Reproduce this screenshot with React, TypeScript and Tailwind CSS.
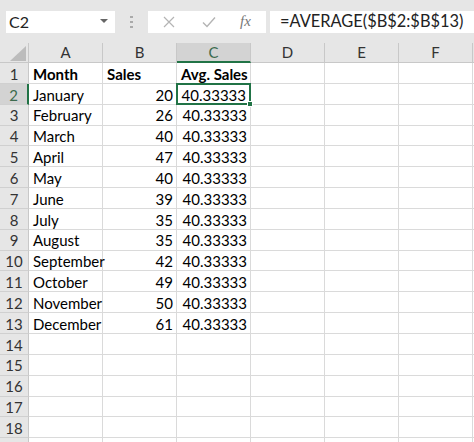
import { Fragment } from "react";

const rows: [string, string, string][] = [
  ["January", "20", "40.33333"],
  ["February", "26", "40.33333"],
  ["March", "40", "40.33333"],
  ["April", "47", "40.33333"],
  ["May", "40", "40.33333"],
  ["June", "39", "40.33333"],
  ["July", "35", "40.33333"],
  ["August", "35", "40.33333"],
  ["September", "42", "40.33333"],
  ["October", "49", "40.33333"],
  ["November", "50", "40.33333"],
  ["December", "61", "40.33333"],
];

const cols = ["A", "B", "C", "D", "E", "F"];
const font = { fontFamily: "Lato, 'Liberation Sans', sans-serif" };

function Cell({ children, right, bold }: { children?: React.ReactNode; right?: boolean; bold?: boolean }) {
  return (
    <div
      className={`h-[20.85px] border-r border-b border-[#dadada] flex items-center pt-[2px] overflow-visible whitespace-nowrap text-[15px] text-black ${
        right ? "justify-end pr-[3px]" : "pl-[4px]"
      } ${bold ? "font-bold" : ""}`}
    >
      {children}
    </div>
  );
}

export default function App() {
  return (
    <div className="w-[474px] h-[442px] overflow-hidden bg-white" style={font}>
      {/* formula bar */}
      <div className="h-[43px] bg-[#e6e6e6] flex items-center pl-[6px]">
        <div className="w-[109px] h-[22px] bg-white flex items-center justify-between pl-[3px] pr-[7px] text-[16px] text-[#222]">
          <span>C2</span>
          <svg width="8" height="5" viewBox="0 0 8 5">
            <path d="M0 0 L8 0 L4 4 Z" fill="#666" />
          </svg>
        </div>
        <div className="w-[33px] flex flex-col items-center gap-[3px]">
          <span className="w-[3px] h-[2px] bg-[#aaa]" />
          <span className="w-[3px] h-[2px] bg-[#aaa]" />
          <span className="w-[3px] h-[2px] bg-[#aaa]" />
        </div>
        <div className="w-[118px] h-[22px] bg-white flex items-center pl-[14px]">
          <svg width="12" height="12" viewBox="0 0 12 12" className="ml-[1px]">
            <path d="M1 1 L11 11 M11 1 L1 11" stroke="#b4b4b4" strokeWidth="1.2" />
          </svg>
          <svg width="14" height="12" viewBox="0 0 14 12" className="ml-[27px]">
            <path d="M1 6.5 L5 10.5 L13 1.5" stroke="#b4b4b4" strokeWidth="1.4" fill="none" />
          </svg>
          <span className="ml-[24px] text-[15px] italic text-[#777]" style={{ fontFamily: "'Liberation Serif', serif" }}>
            fx
          </span>
        </div>
        <div className="ml-[4px] flex-1 h-[22px] bg-white flex items-center pl-[10px] text-[16.4px] text-[#222]">
          =AVERAGE($B$2:$B$13)
        </div>
      </div>

      {/* sheet */}
      <div className="grid grid-cols-[29px_repeat(6,74px)_1fr]">
        {/* header row */}
        <div className="h-[20px] bg-[#e6e6e6] border-r border-b border-[#c8c8c8] flex items-end justify-end">
          <svg width="16" height="15" viewBox="0 0 16 15" className="mb-[1px] mr-[2px]">
            <path d="M0 15 L16 15 L16 0 Z" fill="#bcbcbc" />
          </svg>
        </div>
        {cols.map((c) =>
          c === "C" ? (
            <div
              key={c}
              className="h-[20px] bg-[#d3d3d3] border-r border-[#c8c8c8] border-b-2 border-b-[#217346] flex items-center justify-center text-[15px] text-[#3d6b4e]"
            >
              {c}
            </div>
          ) : (
            <div
              key={c}
              className="h-[20px] bg-[#e6e6e6] border-r border-b border-[#c8c8c8] flex items-center justify-center text-[15px] text-[#333]"
            >
              {c}
            </div>
          )
        )}
        <div className="h-[20px] bg-[#e6e6e6] border-b border-[#c8c8c8]" />

        {Array.from({ length: 19 }, (_, i) => {
          const n = i + 1;
          const data = n >= 2 && n <= 13 ? rows[n - 2] : null;
          const sel = n === 2;
          return (
            <Fragment key={n}>
              <div
                className={`h-[20.85px] border-b border-[#d0d0d0] flex items-center justify-center pt-[2px] text-[15px] ${
                  sel
                    ? "bg-[#d3d3d3] border-r-2 border-r-[#217346] text-[#3d6b4e]"
                    : "bg-[#e6e6e6] border-r border-r-[#c8c8c8] text-[#333]"
                }`}
              >
                {n <= 18 ? n : ""}
              </div>
              {n === 1 ? (
                <>
                  <Cell bold>Month</Cell>
                  <Cell bold>Sales</Cell>
                  <Cell bold>Avg. Sales</Cell>
                </>
              ) : data ? (
                <>
                  <Cell>{data[0]}</Cell>
                  <Cell right>{data[1]}</Cell>
                  {sel ? (
                    <div className="relative h-[20.85px] border-r border-b border-[#dadada]">
                      <div className="absolute -top-[1px] -left-[1px] right-[-1px] bottom-[-1px] border-2 border-[#217346] flex items-center justify-end pt-[2px] pr-[3px] text-[15px] text-black">
                        40.33333
                      </div>
                      <div className="absolute -right-[3px] -bottom-[3px] w-[6px] h-[6px] bg-[#217346] border border-white" />
                    </div>
                  ) : (
                    <Cell right>{data[2]}</Cell>
                  )}
                </>
              ) : (
                <>
                  <Cell />
                  <Cell />
                  <Cell />
                </>
              )}
              <Cell />
              <Cell />
              <Cell />
              <div className="h-[20.85px] border-b border-[#dadada]" />
            </Fragment>
          );
        })}
      </div>
    </div>
  );
}
